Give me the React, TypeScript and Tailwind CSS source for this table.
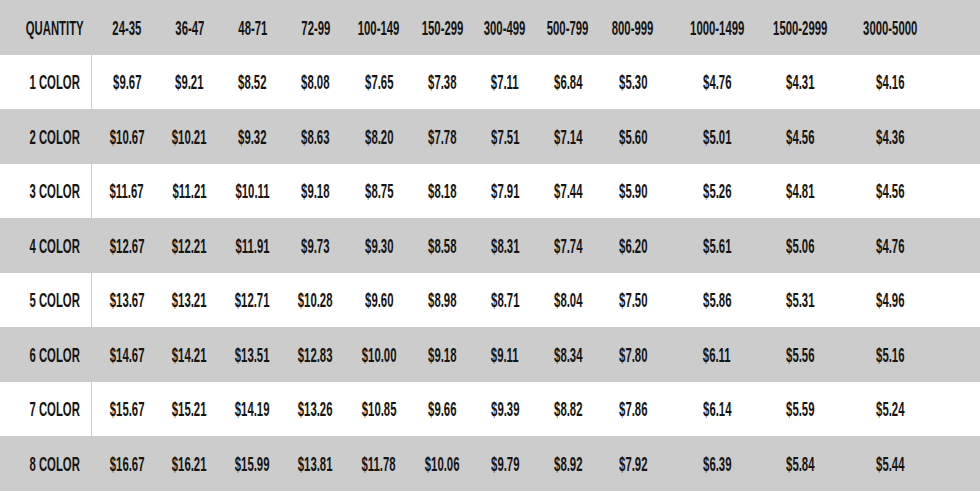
const ranges = [
  "24-35",
  "36-47",
  "48-71",
  "72-99",
  "100-149",
  "150-299",
  "300-499",
  "500-799",
  "800-999",
  "1000-1499",
  "1500-2999",
  "3000-5000",
];

const prices: string[][] = [
  ["$9.67", "$9.21", "$8.52", "$8.08", "$7.65", "$7.38", "$7.11", "$6.84", "$5.30", "$4.76", "$4.31", "$4.16"],
  ["$10.67", "$10.21", "$9.32", "$8.63", "$8.20", "$7.78", "$7.51", "$7.14", "$5.60", "$5.01", "$4.56", "$4.36"],
  ["$11.67", "$11.21", "$10.11", "$9.18", "$8.75", "$8.18", "$7.91", "$7.44", "$5.90", "$5.26", "$4.81", "$4.56"],
  ["$12.67", "$12.21", "$11.91", "$9.73", "$9.30", "$8.58", "$8.31", "$7.74", "$6.20", "$5.61", "$5.06", "$4.76"],
  ["$13.67", "$13.21", "$12.71", "$10.28", "$9.60", "$8.98", "$8.71", "$8.04", "$7.50", "$5.86", "$5.31", "$4.96"],
  ["$14.67", "$14.21", "$13.51", "$12.83", "$10.00", "$9.18", "$9.11", "$8.34", "$7.80", "$6.11", "$5.56", "$5.16"],
  ["$15.67", "$15.21", "$14.19", "$13.26", "$10.85", "$9.66", "$9.39", "$8.82", "$7.86", "$6.14", "$5.59", "$5.24"],
  ["$16.67", "$16.21", "$15.99", "$13.81", "$11.78", "$10.06", "$9.79", "$8.92", "$7.92", "$6.39", "$5.84", "$5.44"],
];

// condensed look: Liberation Sans bold squeezed horizontally
function Label({ children }: { children: string }) {
  return (
    <span className="inline-block scale-x-[0.54] whitespace-nowrap text-[21px] font-bold leading-none text-[#141414]">
      {children}
    </span>
  );
}

function Row({ first, cells, gray }: { first: string; cells: string[]; gray: boolean }) {
  return (
    <div
      className={`grid h-[54.5px] grid-cols-[92px_66px_63px_63px_63px_64px_63px_62px_64px_66px_102px_64px_116px_1fr] ${
        gray ? "bg-[#cccccc]" : "bg-white"
      }`}
    >
      <div className="flex items-center justify-center border-r border-[#cccccc] pl-[18px]">
        <Label>{first}</Label>
      </div>
      {cells.map((c, i) => (
        <div key={i} className={`flex items-center justify-center ${i === 0 ? "pl-1" : ""}`}>
          <Label>{c}</Label>
        </div>
      ))}
      <div />
    </div>
  );
}

export default function App() {
  return (
    <div className="h-[492px] w-[980px] overflow-hidden bg-white font-['Liberation_Sans',Arial,sans-serif]">
      <Row first="QUANTITY" cells={ranges} gray />
      {prices.map((row, i) => (
        <Row key={i} first={`${i + 1} COLOR`} cells={row} gray={i % 2 === 1} />
      ))}
    </div>
  );
}
